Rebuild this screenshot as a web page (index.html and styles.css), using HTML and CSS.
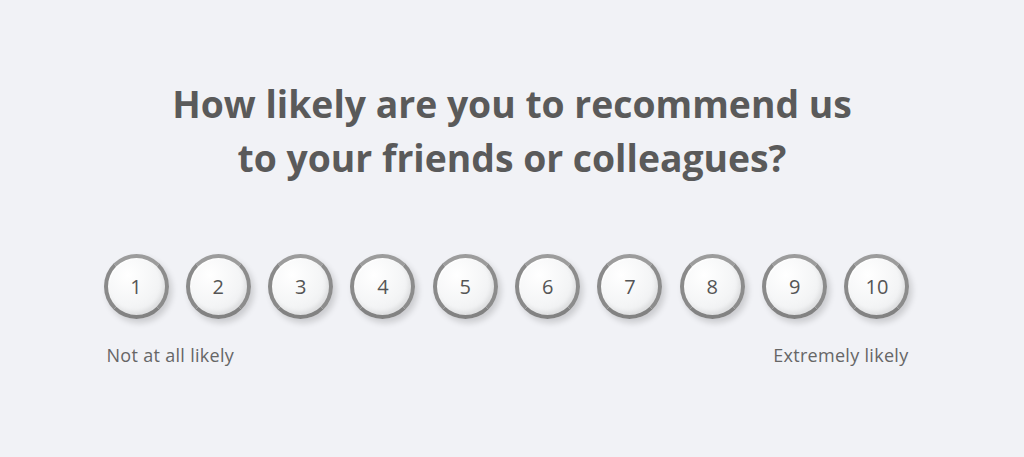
FILE: index.html
```html
<!DOCTYPE html>
<html lang="en">
<head>
<meta charset="utf-8">
<link rel="stylesheet" href="styles.css">
</head>
<body>
<main class="survey">
  <h1 class="question">How likely are you to recommend us<br>to your friends or colleagues?</h1>
  <div class="scale">
    <div class="options">
      <button class="opt">1</button>
      <button class="opt">2</button>
      <button class="opt">3</button>
      <button class="opt">4</button>
      <button class="opt">5</button>
      <button class="opt">6</button>
      <button class="opt">7</button>
      <button class="opt">8</button>
      <button class="opt">9</button>
      <button class="opt">10</button>
    </div>
    <div class="labels">
      <span>Not at all likely</span>
      <span>Extremely likely</span>
    </div>
  </div>
</main>
</body>
</html>
```

FILE: styles.css
```css
html, body {
  margin: 0;
  padding: 0;
}
body {
  background: #f1f2f6;
  width: 1024px;
  height: 457px;
  overflow: hidden;
  font-family: "Open Sans", "Liberation Sans", sans-serif;
}
.survey {
  display: flex;
  flex-direction: column;
  align-items: center;
  padding-top: 77px;
}
.question {
  margin: 0;
  font-size: 37.3px;
  font-weight: 700;
  line-height: 54px;
  color: #5a5a5a;
  text-align: center;
}
.scale {
  width: 806px;
  margin-top: 69px;
  margin-left: -11px;
}
.options {
  display: flex;
  justify-content: space-between;
}
.opt {
  width: 65px;
  height: 65px;
  border-radius: 50%;
  border: 4px solid #8e8e8e;
  border-color: #9c9c9c #8c8c8c #828282 #8a8a8a;
  background: radial-gradient(circle at 35% 30%, #ffffff 0%, #f4f5f6 55%, #e6e7e9 100%);
  box-shadow: 3px 4px 6px rgba(0, 0, 0, 0.16), inset -2px -3px 4px rgba(0, 0, 0, 0.07), inset 1px 1px 2px rgba(255,255,255,0.9);
  font-family: "Open Sans", "Liberation Sans", sans-serif;
  font-size: 20px;
  color: #555;
  padding: 0;
  display: flex;
  align-items: center;
  justify-content: center;
}
.labels {
  display: flex;
  justify-content: space-between;
  margin-top: 24px;
  padding: 0 1px 0 3px;
  font-size: 18px;
  letter-spacing: 0.3px;
  color: #666;
}
```
